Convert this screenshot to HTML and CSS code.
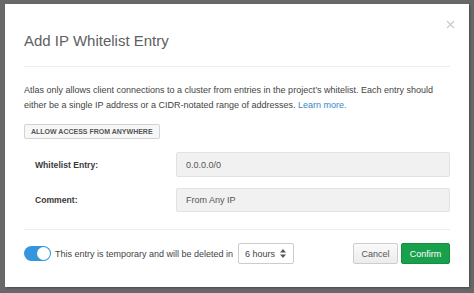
FILE: index.html
```html
<!DOCTYPE html>
<html lang="en">

<head>
  <meta charset="UTF-8" />
  <meta name="viewport" content="width=device-width, initial-scale=1.0" />
  <title>Add IP Whitelist Entry</title>
  <link rel="stylesheet" href="styles.css">
</head>

<body>
  <div class="modal">
    <button class="modal-close" aria-label="Close">
      <svg width="9" height="9" viewBox="0 0 9 9"><path d="M1 1L8 8M8 1L1 8" stroke="#c8c8c8" stroke-width="1.1" fill="none"/></svg>
    </button>

    <div class="modal-header">
      <h2>Add IP Whitelist Entry</h2>
    </div>

    <div class="modal-body">
      <p class="intro">
        Atlas only allows client connections to a cluster from entries in the project’s whitelist. Each entry should
        either be a single IP address or a CIDR-notated range of addresses. <a href="#">Learn more.</a>
      </p>

      <button class="btn-small">Allow access from anywhere</button>

      <div class="form-row">
        <label>Whitelist Entry:</label>
        <div class="field">0.0.0.0/0</div>
      </div>
      <div class="form-row">
        <label>Comment:</label>
        <div class="field">From Any IP</div>
      </div>
    </div>

    <div class="modal-footer">
      <div class="toggle"><span class="knob"></span></div>
      <span class="temp-text">This entry is temporary and will be deleted in</span>
      <div class="select">
        6 hours
        <svg width="6" height="9" viewBox="0 0 6 9"><path d="M3 0L6 3.6H0Z M3 9L0 5.4H6Z" fill="#555"/></svg>
      </div>
      <div class="actions">
        <button class="btn">Cancel</button>
        <button class="btn btn-primary">Confirm</button>
      </div>
    </div>
  </div>
</body>

</html>
```

FILE: styles.css
```css
* {
  box-sizing: border-box;
}

html,
body {
  margin: 0;
  padding: 0;
  height: 100%;
  overflow: hidden;
}

body {
  background: #686868;
  font-family: "Liberation Sans", Arial, sans-serif;
  padding: 4px 0 0 5px;
}

.modal {
  position: relative;
  width: 464px;
  height: 283px;
  background: #fff;
  padding: 0 19px;
  box-shadow: 1px 1px 2px rgba(0, 0, 0, 0.3);
}

.modal-close {
  position: absolute;
  top: 16px;
  right: 14px;
  border: none;
  background: none;
  padding: 0;
  line-height: 0;
}

.modal-header {
  padding: 28px 0 17px;
  border-bottom: 1px solid #ececec;
}

.modal-header h2 {
  margin: 0;
  font-size: 15px;
  line-height: 17px;
  font-weight: normal;
  color: #606060;
}

.modal-body {
  padding-top: 16px;
  padding-bottom: 17px;
  border-bottom: 1px solid #ececec;
}

.intro {
  margin: 0 0 11px;
  font-size: 9px;
  line-height: 15px;
  color: #444;
}

.intro a {
  color: #3a86c4;
  text-decoration: none;
}

.btn-small {
  display: block;
  height: 15px;
  padding: 0 6px;
  font-family: inherit;
  font-size: 7px;
  font-weight: bold;
  text-transform: uppercase;
  color: #555;
  background: #f7f7f7;
  border: 1px solid #d2d2d2;
  border-radius: 2px;
  margin-bottom: 13px;
}

.form-row {
  display: flex;
  align-items: center;
  height: 25px;
}

.form-row + .form-row {
  margin-top: 11px;
  height: 24px;
}

.form-row label {
  width: 152px;
  padding-left: 11px;
  font-size: 8.6px;
  font-weight: bold;
  color: #3a3a3a;
}

.field {
  flex: 1;
  height: 100%;
  display: flex;
  align-items: center;
  padding-left: 9px;
  background: #f1f1f1;
  border: 1px solid #e2e2e2;
  border-radius: 2px;
  font-size: 9px;
  color: #555;
}

.modal-footer {
  display: flex;
  align-items: center;
  padding-top: 13px;
}

.toggle {
  width: 27px;
  height: 15px;
  border-radius: 8px;
  background: #3497dd;
  position: relative;
  margin-right: 4px;
}

.toggle .knob {
  position: absolute;
  right: 1px;
  top: 1px;
  width: 13px;
  height: 13px;
  border-radius: 50%;
  background: #fff;
}

.temp-text {
  font-size: 9px;
  color: #444;
}

.select {
  display: flex;
  align-items: center;
  justify-content: space-between;
  margin-left: 5px;
  width: 56px;
  height: 21px;
  padding: 0 7px 0 6px;
  border: 1px solid #ccc;
  border-radius: 2px;
  font-size: 9px;
  color: #444;
}

.actions {
  margin-left: auto;
  display: flex;
  gap: 3px;
}

.btn {
  height: 21px;
  padding: 0;
  width: 45px;
  font-family: inherit;
  font-size: 9px;
  color: #555;
  background: linear-gradient(#fafafa, #ececec);
  border: 1px solid #cdcdcd;
  border-radius: 2px;
}

.btn-primary {
  width: 49px;
  color: #fff;
  background: #18a04c;
  border-color: #12903f;
}
```
